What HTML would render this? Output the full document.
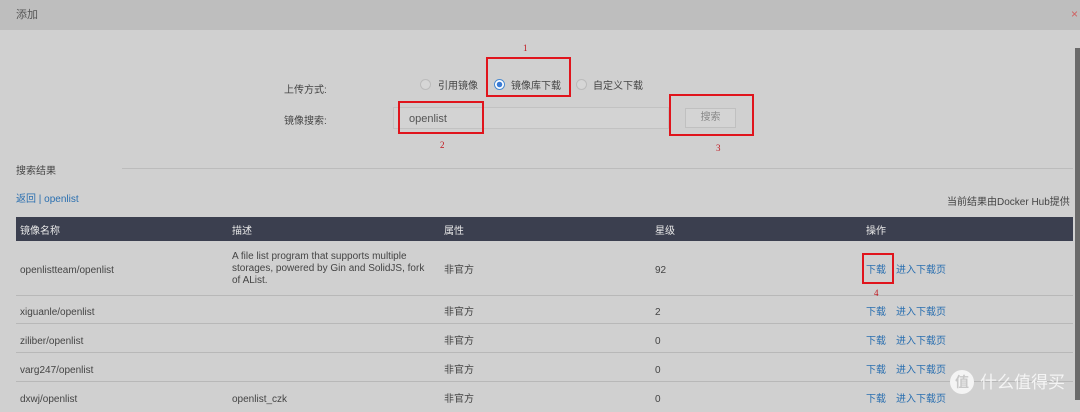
<!DOCTYPE html>
<html><head><meta charset="utf-8"><style>
*{margin:0;padding:0;box-sizing:border-box}
body{width:1080px;height:406px;background:#d0d0d0;font-family:"Liberation Sans","Noto Sans CJK SC",sans-serif;font-size:10px;color:#444;position:relative;overflow:hidden}
.a{position:absolute;white-space:nowrap;line-height:18px}
.a:not([style*="background"]){margin-top:3px}
.red{position:absolute;border:2px solid #e0141c}
.rn{position:absolute;color:#c0141c;font-size:9px;font-family:"Liberation Serif",serif}
.lnk{color:#2a6fb0}
.hd{position:absolute;left:16px;top:217px;width:1057px;height:24px;background:#3b3f4f;color:#e8e8e8}
.row{position:absolute;left:16px;width:1057px;border-bottom:1px solid #b8b8b8}
.radio{position:absolute;width:11px;height:11px;border-radius:50%;border:1px solid #bbb;background:#d6d6d6}
</style></head><body>
<div class="a" style="left:0;top:0;width:1080px;height:30px;background:#bebebe"></div>
<div class="a" style="left:16px;top:3px;font-size:11px;color:#555">添加</div>
<div class="a" style="left:1071px;top:2px;color:#d06060;font-size:12px">×</div>
<div class="a" style="left:1075px;top:48px;width:5px;height:352px;background:#6a6a6a"></div>

<div class="a" style="left:284px;top:79px">上传方式:</div>
<div class="radio" style="left:420px;top:79px"></div>
<div class="a" style="left:438px;top:75px">引用镜像</div>
<div class="radio" style="left:494px;top:79px;border-color:#4a8ad0;background:radial-gradient(#3a7bd5 0 2.5px,#fff 3px)"></div>
<div class="a" style="left:511px;top:75px">镜像库下载</div>
<div class="radio" style="left:576px;top:79px"></div>
<div class="a" style="left:593px;top:75px">自定义下载</div>
<div class="red" style="left:486px;top:57px;width:85px;height:40px"></div>
<div class="rn" style="left:523px;top:43px">1</div>

<div class="a" style="left:284px;top:110px">镜像搜索:</div>
<div class="a" style="left:393px;top:107px;width:276px;height:22px;border:1px solid #c2c2c2;background:#d3d3d3"></div>
<div class="a" style="left:409px;top:107px;font-size:11px;color:#555">openlist</div>
<div class="red" style="left:398px;top:101px;width:86px;height:33px"></div>
<div class="rn" style="left:440px;top:140px">2</div>
<div class="a" style="left:685px;top:108px;width:51px;height:20px;border:1px solid #c0c0c0;background:#d4d4d4;color:#888;text-align:center;line-height:18px">搜索</div>
<div class="red" style="left:669px;top:94px;width:85px;height:42px"></div>
<div class="rn" style="left:716px;top:143px">3</div>

<div class="a" style="left:16px;top:160px">搜索结果</div>
<div class="a" style="left:122px;top:168px;width:951px;height:1px;background:#bcbcbc"></div>
<div class="a" style="left:16px;top:188px"><span class="lnk">返回</span> <span style="color:#2a6fb0">| openlist</span></div>
<div class="a" style="left:947px;top:191px;font-size:10px">当前结果由Docker Hub提供</div>

<div class="hd">
<span class="a" style="left:4px;top:3px">镜像名称</span>
<span class="a" style="left:216px;top:3px">描述</span>
<span class="a" style="left:428px;top:3px">属性</span>
<span class="a" style="left:639px;top:3px">星级</span>
<span class="a" style="left:850px;top:3px">操作</span>
</div>

<div class="row" style="top:241px;height:55px">
<span class="a" style="left:4px;top:18px">openlistteam/openlist</span>
<span class="a" style="left:216px;top:7px;white-space:normal;width:200px;line-height:12px">A file list program that supports multiple storages, powered by Gin and SolidJS, fork of AList.</span>
<span class="a" style="left:428px;top:18px">非官方</span>
<span class="a" style="left:639px;top:18px">92</span>
<span class="a lnk" style="left:850px;top:18px">下载</span>
<span class="a lnk" style="left:880px;top:18px">进入下载页</span>
</div>
<div class="red" style="left:862px;top:253px;width:32px;height:31px"></div>
<div class="rn" style="left:874px;top:288px">4</div>

<div class="row" style="top:296px;height:28px">
<span class="a" style="left:4px;top:5px">xiguanle/openlist</span>
<span class="a" style="left:428px;top:5px">非官方</span>
<span class="a" style="left:639px;top:5px">2</span>
<span class="a lnk" style="left:850px;top:5px">下载</span>
<span class="a lnk" style="left:880px;top:5px">进入下载页</span>
</div>
<div class="row" style="top:324px;height:29px">
<span class="a" style="left:4px;top:6px">ziliber/openlist</span>
<span class="a" style="left:428px;top:6px">非官方</span>
<span class="a" style="left:639px;top:6px">0</span>
<span class="a lnk" style="left:850px;top:6px">下载</span>
<span class="a lnk" style="left:880px;top:6px">进入下载页</span>
</div>
<div class="row" style="top:353px;height:29px">
<span class="a" style="left:4px;top:6px">varg247/openlist</span>
<span class="a" style="left:428px;top:6px">非官方</span>
<span class="a" style="left:639px;top:6px">0</span>
<span class="a lnk" style="left:850px;top:6px">下载</span>
<span class="a lnk" style="left:880px;top:6px">进入下载页</span>
</div>
<div class="row" style="top:382px;height:30px;border:none">
<span class="a" style="left:4px;top:6px">dxwj/openlist</span>
<span class="a" style="left:216px;top:6px">openlist_czk</span>
<span class="a" style="left:428px;top:6px">非官方</span>
<span class="a" style="left:639px;top:6px">0</span>
<span class="a lnk" style="left:850px;top:6px">下载</span>
<span class="a lnk" style="left:880px;top:6px">进入下载页</span>
</div>

<div class="a" style="left:950px;top:370px;width:24px;height:24px;border-radius:50%;background:#f4f4f4;color:#c8c8c8;font-size:14px;text-align:center;line-height:24px;font-weight:bold">值</div>
<div class="a" style="left:980px;top:370px;font-size:17px;line-height:20px;color:#f4f4f4">什么值得买</div>
</body></html>
